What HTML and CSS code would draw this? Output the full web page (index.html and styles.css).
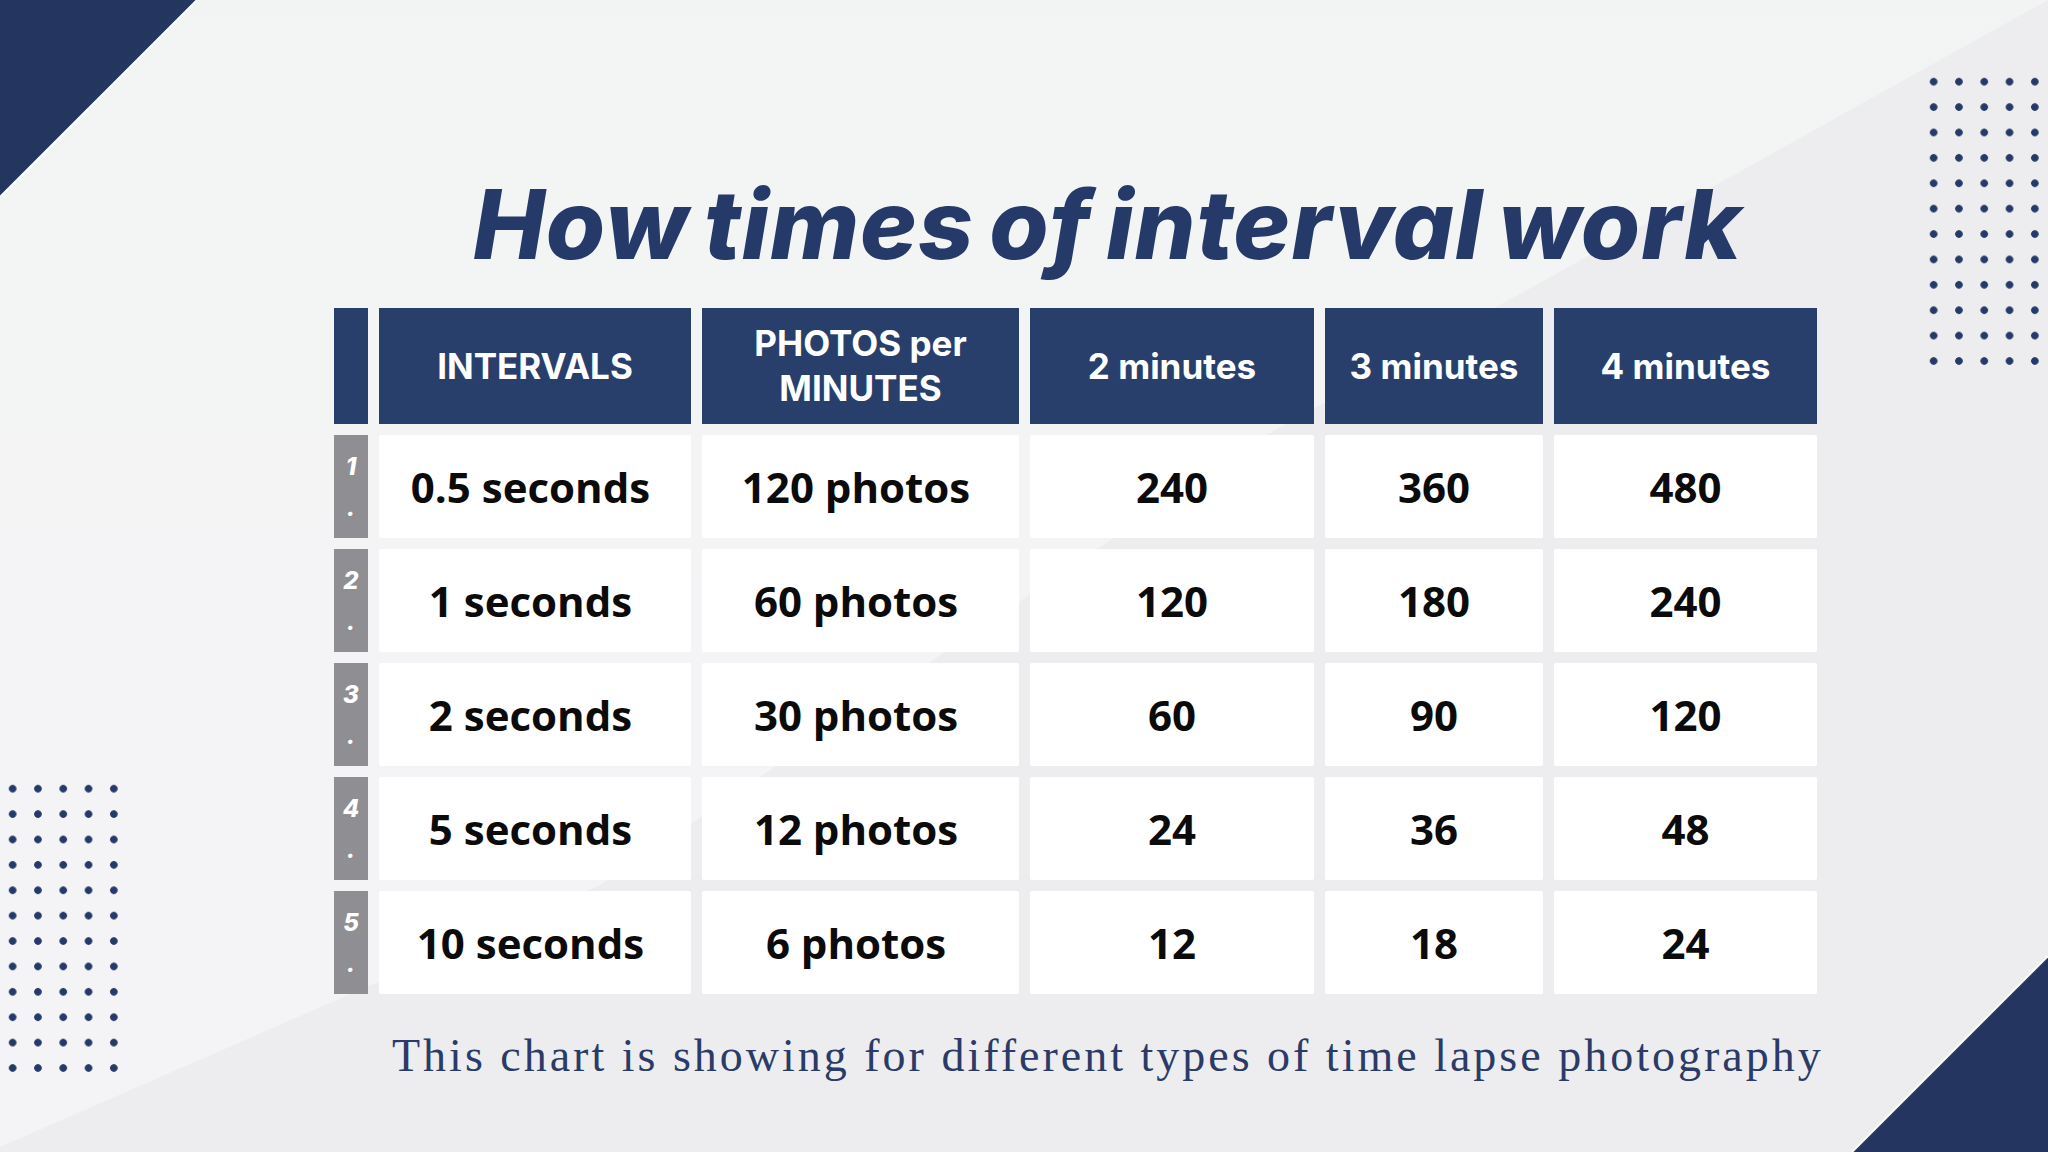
FILE: index.html
```html
<!DOCTYPE html>
<html lang="en">
<head>
<meta charset="utf-8">
<title>How times of interval work</title>
<link rel="stylesheet" href="styles.css">
</head>
<body>
<div class="slide">
  <svg class="backdrop" viewBox="0 0 2048 1152" width="2048" height="1152" aria-hidden="true">
    <polygon points="2048,0 1263,437 600,885 0,1147 0,1152 2048,1152" fill="#ededef"/>
    <polygon points="0,0 197,0 0,197" fill="#243660"/>
    <line x1="197" y1="0" x2="0" y2="197" stroke="#ffffff" stroke-width="2"/>
    <polygon points="2048,956 2048,1152 1852,1152" fill="#243660"/>
    <line x1="2048" y1="956" x2="1852" y2="1152" stroke="#ffffff" stroke-width="2"/>
  </svg>
  <div class="dots dots-tr"></div>
  <div class="dots dots-bl"></div>

  <main class="content">
    <h1 class="title">How times of interval work</h1>

    <div class="table">
      <div class="cell head idx"></div>
      <div class="cell head">INTERVALS</div>
      <div class="cell head two">PHOTOS per<br>MINUTES</div>
      <div class="cell head">2 minutes</div>
      <div class="cell head">3 minutes</div>
      <div class="cell head">4 minutes</div>

      <div class="cell idx num">1<br>.</div>
      <div class="cell body txt">0.5 seconds</div>
      <div class="cell body txt">120 photos</div>
      <div class="cell body">240</div>
      <div class="cell body">360</div>
      <div class="cell body">480</div>

      <div class="cell idx num">2<br>.</div>
      <div class="cell body txt">1 seconds</div>
      <div class="cell body txt">60 photos</div>
      <div class="cell body">120</div>
      <div class="cell body">180</div>
      <div class="cell body">240</div>

      <div class="cell idx num">3<br>.</div>
      <div class="cell body txt">2 seconds</div>
      <div class="cell body txt">30 photos</div>
      <div class="cell body">60</div>
      <div class="cell body">90</div>
      <div class="cell body">120</div>

      <div class="cell idx num">4<br>.</div>
      <div class="cell body txt">5 seconds</div>
      <div class="cell body txt">12 photos</div>
      <div class="cell body">24</div>
      <div class="cell body">36</div>
      <div class="cell body">48</div>

      <div class="cell idx num">5<br>.</div>
      <div class="cell body txt">10 seconds</div>
      <div class="cell body txt">6 photos</div>
      <div class="cell body">12</div>
      <div class="cell body">18</div>
      <div class="cell body">24</div>
    </div>

    <p class="caption">This chart is showing for different types of time lapse photography</p>
  </main>
</div>
</body>
</html>
```
FILE: styles.css
```css
html, body {
  margin: 0;
  padding: 0;
}
body {
  width: 2048px;
  height: 1152px;
  overflow: hidden;
  background: #f3f4f4;
}
.slide {
  position: relative;
  width: 2048px;
  height: 1152px;
  overflow: hidden;
  background: linear-gradient(180deg, #f2f4f3 0%, #f4f4f5 40%, #f4f3f6 100%);
}
.backdrop {
  position: absolute;
  left: 0;
  top: 0;
  display: block;
}
.dots {
  position: absolute;
  background-image: radial-gradient(circle at center, #263a68 0, #263a68 3.4px, rgba(38,58,104,0) 4.1px);
  background-size: 25.3px 25.4px;
}
.dots-tr {
  left: 1921px;
  top: 69px;
  width: 127px;
  height: 305px;
}
.dots-bl {
  left: 0px;
  top: 776px;
  width: 126px;
  height: 305px;
}
.content {
  position: relative;
  display: flex;
  flex-direction: column;
  padding-top: 176px;
  padding-left: 334px;
}
.title {
  margin: 0 0 36px 139px;
  font-family: "Inter", "Liberation Sans", sans-serif;
  font-weight: 800;
  font-style: italic;
  font-size: 96px;
  line-height: 96px;
  letter-spacing: 1px;
  word-spacing: -7px;
  color: #253a69;
  white-space: nowrap;
}
.table {
  display: grid;
  grid-template-columns: 34px 312px 317px 284px 218px 263px;
  grid-template-rows: 116px repeat(5, 103px);
  column-gap: 11px;
  row-gap: 11px;
}
.cell {
  display: flex;
  align-items: center;
  justify-content: center;
  text-align: center;
}
.head {
  background: #283f6b;
  color: #ffffff;
  font-family: "Inter", "Liberation Sans", sans-serif;
  font-weight: 700;
  font-size: 35px;
  line-height: 45px;
}
.idx.num {
  background: #8f8f93;
  color: #ffffff;
  font-family: "Inter", "Liberation Sans", sans-serif;
  font-weight: 800;
  font-style: italic;
  font-size: 24px;
  line-height: 41px;
}
.body {
  background: #ffffff;
  border-radius: 2px;
  color: #0b0b0b;
  font-family: "Open Sans", "Liberation Sans", sans-serif;
  font-weight: 700;
  font-size: 42px;
}
.body.txt {
  padding-right: 9px;
}
.caption {
  margin: 39px 0 0 58px;
  font-family: "Liberation Serif", "DejaVu Serif", serif;
  font-size: 46px;
  line-height: 46px;
  letter-spacing: 3px;
  color: #2a3b67;
  white-space: nowrap;
}
```
